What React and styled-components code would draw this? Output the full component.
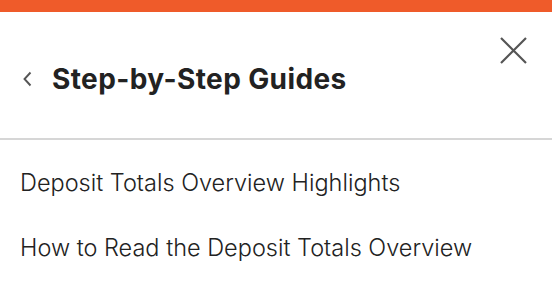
import React from 'react';
import styled, { createGlobalStyle } from 'styled-components';

const Global = createGlobalStyle`
  html, body {
    margin: 0;
    padding: 0;
    background: #fff;
  }
  body {
    font-family: Inter, "Liberation Sans", sans-serif;
    color: #222;
  }
`;

const Panel = styled.div`
  width: 552px;
  height: 288px;
  display: flex;
  flex-direction: column;
  overflow: hidden;
`;

const TopBar = styled.div`
  height: 12px;
  background: #ef5b2a;
  flex-shrink: 0;
`;

const Header = styled.div`
  position: relative;
  height: 128px;
  display: flex;
  align-items: center;
  padding: 8px 0 0 22px;
  border-bottom: 2px solid #d6d6d6;
  box-sizing: border-box;
  flex-shrink: 0;
`;

const BackButton = styled.button`
  border: none;
  background: none;
  padding: 0;
  margin-right: 19px;
  display: flex;
  align-items: center;
  cursor: pointer;
`;

const Title = styled.h1`
  margin: 0;
  font-size: 28px;
  font-weight: 700;
  color: #222;
  letter-spacing: 0.4px;
`;

const CloseButton = styled.button`
  position: absolute;
  top: 25px;
  right: 25px;
  border: none;
  background: none;
  padding: 0;
  cursor: pointer;
  display: flex;
`;

const List = styled.ul`
  list-style: none;
  margin: 0;
  padding: 29px 0 0 20px;
  display: flex;
  flex-direction: column;
  gap: 37px;
`;

const Item = styled.li`
  font-size: 23.5px;
  font-weight: 300;
  color: #222;
  line-height: 28px;
`;

export default function App() {
  return (
    <Panel>
      <Global />
      <TopBar />
      <Header>
        <BackButton aria-label="Back">
          <svg width="11" height="16" viewBox="0 0 11 16" fill="none">
            <path d="M8.5 1.5L2.5 8l6 6.5" stroke="#555" strokeWidth="1.9" />
          </svg>
        </BackButton>
        <Title>Step-by-Step Guides</Title>
        <CloseButton aria-label="Close">
          <svg width="27" height="27" viewBox="0 0 27 27" fill="none">
            <path d="M1 1l25 25M26 1L1 26" stroke="#555" strokeWidth="2.2" />
          </svg>
        </CloseButton>
      </Header>
      <List>
        <Item>Deposit Totals Overview Highlights</Item>
        <Item>How to Read the Deposit Totals Overview</Item>
      </List>
    </Panel>
  );
}
